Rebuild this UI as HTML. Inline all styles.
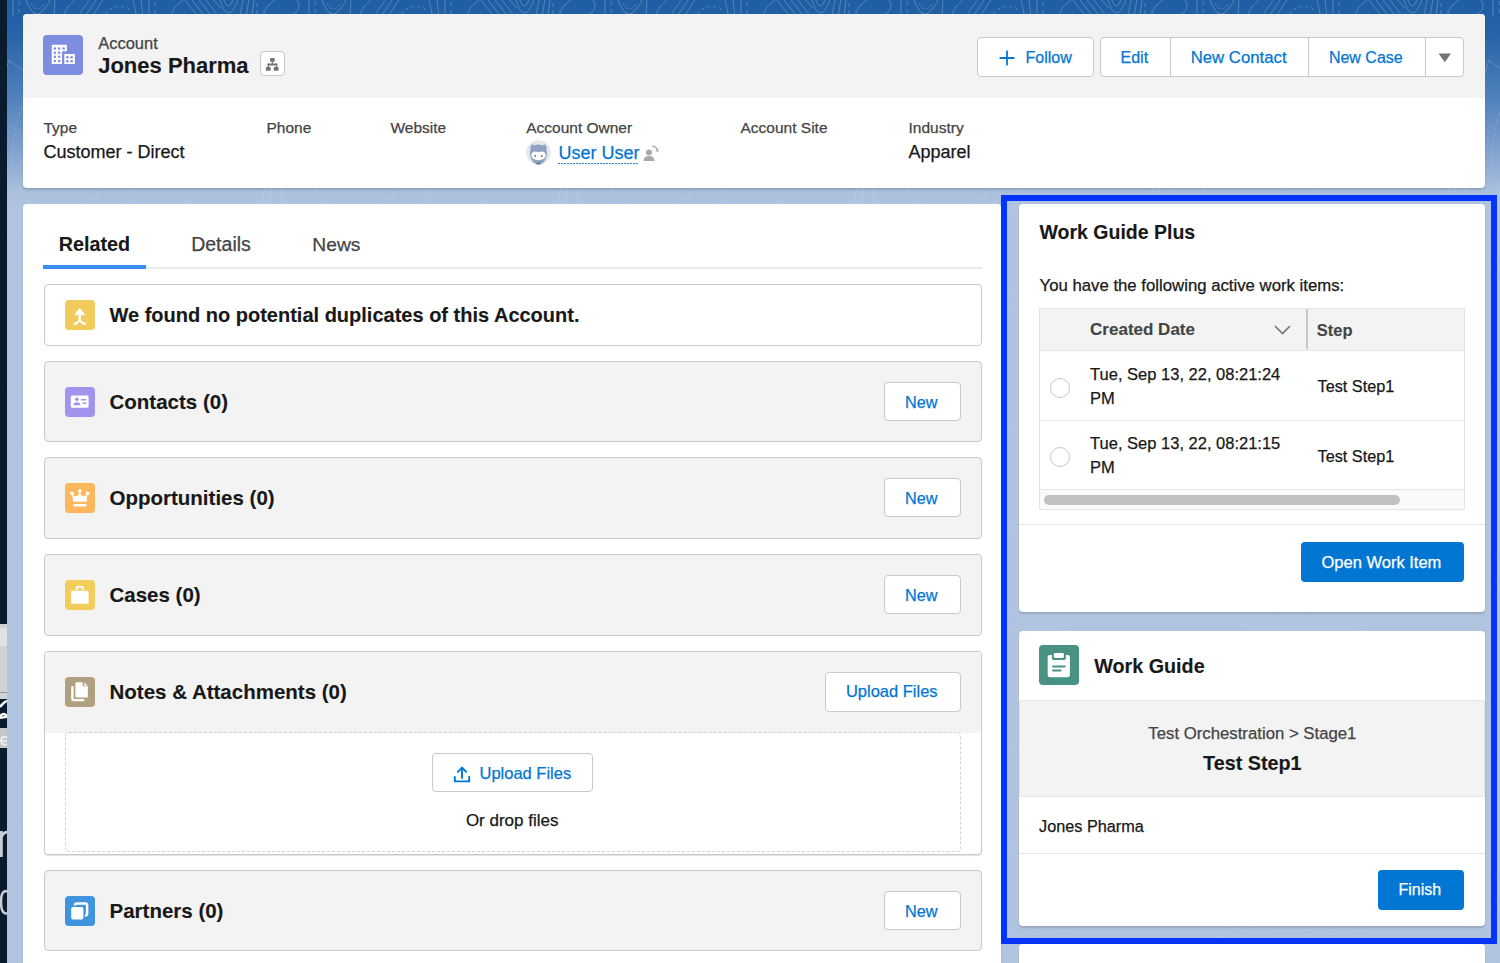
<!DOCTYPE html>
<html><head><meta charset="utf-8"><title>Jones Pharma | Account</title>
<style>
*{margin:0;padding:0;box-sizing:border-box}
html,body{width:1500px;height:963px;overflow:hidden}
body{position:relative;background:#0b1b2e;font-family:"Liberation Sans",sans-serif;color:#181818}
.t{position:absolute;white-space:nowrap;-webkit-text-stroke:0.25px currentColor}
.b{-webkit-text-stroke:0.12px currentColor}
.r{position:absolute}
.bg{position:absolute;left:7px;top:0;width:1493px;height:963px;background:linear-gradient(to bottom,#1e5ea3 0px,#2562a7 30px,#5282bd 100px,#80a2ce 150px,#a9bfdd 190px,#b0c4df 205px,#b0c4df 963px)}
.card{position:absolute;background:#fff;border-radius:4px;box-shadow:0 2px 2px rgba(0,0,0,.14)}
.btn{position:absolute;background:#fff;border:1px solid #c9c9c9;border-radius:4px}
.box{position:absolute;border:1px solid #c9c9c9;border-radius:4px;background:#f3f3f3}
.ico{position:absolute;width:30px;height:30px;border-radius:4px}
.ico svg{position:absolute;left:0;top:0;width:30px;height:30px}
</style></head><body>
<div class="bg">
<svg width="1493" height="963" style="position:absolute;left:0;top:0">
<defs><pattern id="topo" width="296" height="320" patternUnits="userSpaceOnUse" x="178" y="0">
<g fill="none" stroke="rgba(255,255,255,0.24)" stroke-width="1">
<path d="M0 0 L14 18 M7 0 L21 18 M14 0 L28 18 M21 0 L33 16 M28 0 L36 8"/>
<path d="M35 0 Q43 26 53 0 M39 0 Q43 12 48 0"/>
<path d="M55 16 L58 0 M61 16 L64 0 M67 16 L69 0 M72 3 L72 7 M72 10 L72 14"/>
<path d="M90 0 Q72 12 82 24"/>
<path d="M100 20 Q120 10 112 0"/>
<path d="M124 0 L124 16 M130 1 L130 5 M130 9 L130 13"/>
<path d="M137 0 Q147 28 161 0"/><path d="M142 3 Q148 15 156 3" stroke-dasharray="3 2"/>
<path d="M166 0 L165 18"/>
<path d="M186 0 Q170 12 178 24"/>
<path d="M188 18 L200 0 M195 18 L207 0 M202 18 L214 0"/>
<path d="M212 18 Q226 0 242 10" stroke-dasharray="3 3"/>
<path d="M244 0 L248 18 M252 0 L254 18 M260 0 L260 18 M266 2 L266 6 M266 10 L266 14"/>
<path d="M294 0 Q276 12 286 26"/>
<path d="M-160 60 C -120 20, -60 40, -40 90 S 20 160, -10 220"/>
<path d="M30 40 C 60 60, 40 120, 70 150 S 50 230, 90 280"/>
<path d="M40 48 C 66 70, 50 120, 78 148 S 60 226, 98 272"/>
<path d="M120 60 C 150 90, 200 70, 230 100 S 260 160, 240 200 S 180 260, 130 240 S 90 150, 120 60 Z"/>
<path d="M140 90 C 165 110, 200 100, 215 120 S 230 160, 215 185 S 170 220, 145 205 S 115 140, 140 90 Z" stroke-dasharray="4 3"/>
<path d="M0 200 C 40 230, 80 220, 120 260 S 200 300, 296 290"/>
<path d="M0 215 C 40 245, 80 235, 120 275 S 200 312, 296 305"/>
<path d="M250 40 C 270 80, 300 110, 280 160"/>
</g></pattern></defs>
<defs><linearGradient id="fadeg" x1="0" y1="0" x2="0" y2="1"><stop offset="0" stop-color="#fff" stop-opacity="1"/><stop offset="0.2" stop-color="#fff" stop-opacity="0.55"/><stop offset="0.3" stop-color="#fff" stop-opacity="0.3"/><stop offset="1" stop-color="#fff" stop-opacity="0.3"/></linearGradient>
<mask id="fadem"><rect width="1493" height="963" fill="url(#fadeg)"/></mask></defs>
<rect width="1493" height="963" fill="url(#topo)" mask="url(#fadem)"/>
</svg>
</div>

<div class="card" style="left:23px;top:14px;width:1462px;height:174px;overflow:hidden"><div class="r" style="left:0;top:0;width:1462px;height:84px;background:#f3f3f3"></div></div>
<div class="r" style="left:43px;top:35px;width:40px;height:40px;border-radius:4px;background:#7f8de1">
<svg width="40" height="40" viewBox="0 0 40 40" style="position:absolute;left:0;top:0">
<path d="M8.8 9.8 H23.9 V16.3 H19 V29 H8.8 Z" fill="#fff"/>
<rect x="21.3" y="19" width="10.6" height="10" fill="#fff"/>
<g fill="#7f8de1">
<circle cx="11.9" cy="13.6" r="1.25"/><circle cx="16.2" cy="13.6" r="1.25"/><circle cx="20.7" cy="13.6" r="1.25"/>
<circle cx="11.9" cy="17.8" r="1.25"/><circle cx="16.2" cy="17.8" r="1.25"/>
<circle cx="11.9" cy="21.7" r="1.25"/><circle cx="16.2" cy="21.7" r="1.25"/>
<circle cx="11.9" cy="25.9" r="1.25"/><circle cx="16.2" cy="25.9" r="1.25"/>
<circle cx="24.4" cy="22.25" r="1.25"/><circle cx="28.6" cy="22.25" r="1.25"/>
<circle cx="24.4" cy="26.3" r="1.25"/><circle cx="28.6" cy="26.3" r="1.25"/>
</g></svg></div>
<div class="t" style="left:98.20px;top:35.13px;font-size:16.5px;line-height:16.5px;color:#444444;font-weight:400;">Account</div>
<div class="t b" style="left:98.20px;top:54.68px;font-size:22px;line-height:22px;color:#181818;font-weight:700;">Jones Pharma</div>
<div class="btn" style="left:260px;top:51px;width:25px;height:25px">
<svg width="23" height="23" viewBox="0 0 23 23" style="position:absolute;left:0;top:0" fill="#747474">
<rect x="9" y="6" width="4.7" height="3.8" rx="0.8"/>
<rect x="10.8" y="9.5" width="1.1" height="2.6"/>
<rect x="6.65" y="11.6" width="9.55" height="1.8" rx="0.5"/>
<rect x="6.65" y="11.6" width="1.25" height="4"/><rect x="14.95" y="11.6" width="1.25" height="4"/>
<rect x="4.9" y="15.1" width="4.8" height="3.7" rx="0.8"/>
<rect x="12.8" y="15.1" width="4.8" height="3.7" rx="0.8"/>
</svg></div>
<div class="btn" style="left:977px;top:37px;width:117px;height:40px"></div>
<svg width="16" height="16" viewBox="0 0 16 16" style="position:absolute;left:999px;top:50.2px" stroke="#0176d3" stroke-width="1.8" stroke-linecap="round">
<line x1="8" y1="1.3" x2="8" y2="14.7"/><line x1="1.3" y1="8" x2="14.7" y2="8"/></svg>
<div class="t" style="left:1025.50px;top:49.76px;font-size:16.0px;line-height:16.0px;color:#0176d3;font-weight:400;">Follow</div>
<div class="btn" style="left:1100px;top:37px;width:364px;height:40px"></div>
<div class="r" style="left:1170px;top:38px;width:1px;height:38px;background:#c9c9c9"></div>
<div class="r" style="left:1308px;top:38px;width:1px;height:38px;background:#c9c9c9"></div>
<div class="r" style="left:1425px;top:38px;width:1px;height:38px;background:#c9c9c9"></div>
<div class="t" style="left:1120.50px;top:49.76px;font-size:16.0px;line-height:16.0px;color:#0176d3;font-weight:400;">Edit</div>
<div class="t" style="left:1190.70px;top:49.62px;font-size:16.75px;line-height:16.75px;color:#0176d3;font-weight:400;">New Contact</div>
<div class="t" style="left:1328.90px;top:49.76px;font-size:16.0px;line-height:16.0px;color:#0176d3;font-weight:400;">New Case</div>
<svg width="14" height="10" viewBox="0 0 14 10" style="position:absolute;left:1437.5px;top:53px"><path d="M0.5 0.5 L13 0.5 L6.75 9.2 Z" fill="#747474"/></svg>
<div class="t" style="left:43.50px;top:120.38px;font-size:15.5px;line-height:15.5px;color:#444444;font-weight:400;">Type</div>
<div class="t" style="left:266.50px;top:120.38px;font-size:15.5px;line-height:15.5px;color:#444444;font-weight:400;">Phone</div>
<div class="t" style="left:390.50px;top:120.38px;font-size:15.5px;line-height:15.5px;color:#444444;font-weight:400;">Website</div>
<div class="t" style="left:526.20px;top:120.38px;font-size:15.5px;line-height:15.5px;color:#444444;font-weight:400;">Account Owner</div>
<div class="t" style="left:740.50px;top:120.38px;font-size:15.5px;line-height:15.5px;color:#444444;font-weight:400;">Account Site</div>
<div class="t" style="left:908.50px;top:120.38px;font-size:15.5px;line-height:15.5px;color:#444444;font-weight:400;">Industry</div>
<div class="t" style="left:43.50px;top:142.56px;font-size:18.0px;line-height:18.0px;color:#181818;font-weight:400;">Customer - Direct</div>
<div class="t" style="left:908.50px;top:142.56px;font-size:18.0px;line-height:18.0px;color:#181818;font-weight:400;">Apparel</div>
<svg width="25" height="25" viewBox="0 0 25 25" style="position:absolute;left:526px;top:139.5px">
<circle cx="12.5" cy="12.5" r="12.3" fill="#e3e8ef"/>
<path d="M4.5 9.5 Q4.2 5.5 5.8 4.6 Q7 4 8.2 5.6 Q12.5 3.6 16.8 5.6 Q18 4 19.2 4.6 Q20.8 5.5 20.5 9.5 Q22 15 19.5 19.5 Q17 24 12.5 24.5 Q8 24 5.5 19.5 Q3 15 4.5 9.5 Z" fill="#8fa2bf"/>
<ellipse cx="12.5" cy="15.2" rx="7.3" ry="5" fill="#fff"/>
<path d="M6 12 Q9 8.5 12.5 9.6 Q16 8.5 19 12 Q16 11 12.5 12.2 Q9 11 6 12 Z" fill="#8fa2bf"/>
<circle cx="9.2" cy="16" r="0.9" fill="#5f7391"/><circle cx="15.8" cy="16" r="0.9" fill="#5f7391"/>
<ellipse cx="12.5" cy="23.6" rx="2.2" ry="1" fill="#5f7391"/>
</svg>
<div class="t" style="left:558.50px;top:144.06px;font-size:18.0px;line-height:18.0px;color:#0176d3;font-weight:400;">User User</div>
<div class="r" style="left:558px;top:162.5px;width:81px;height:1.5px;background:repeating-linear-gradient(to right,#0176d3 0 2px,transparent 2px 3px);opacity:.85"></div>
<svg width="16" height="17" viewBox="0 0 16 17" style="position:absolute;left:643px;top:145px" fill="#a9a9a9">
<circle cx="6" cy="7.5" r="3"/>
<path d="M0.5 16 Q0.5 11 6 11 Q11.5 11 11.5 16 Z"/>
<path d="M9 1.5 Q14 1 14.5 6" stroke="#a9a9a9" stroke-width="1.3" fill="none"/>
<path d="M12.5 5 L14.6 7.6 L16 4.6 Z"/>
</svg>
<div class="card" style="left:23px;top:204px;width:978px;height:800px"></div>
<div class="t b" style="left:58.70px;top:234.78px;font-size:19.75px;line-height:19.75px;color:#181818;font-weight:700;">Related</div>
<div class="t" style="left:191.20px;top:234.99px;font-size:19.5px;line-height:19.5px;color:#444444;font-weight:400;">Details</div>
<div class="t" style="left:312.30px;top:235.20px;font-size:19.25px;line-height:19.25px;color:#444444;font-weight:400;">News</div>
<div class="r" style="left:43px;top:267px;width:939px;height:2px;background:#ebebeb"></div>
<div class="r" style="left:43px;top:265px;width:103px;height:4px;background:#3a8ef3"></div>
<div class="box" style="left:44px;top:284px;width:938px;height:62px;background:#fff"></div>
<div class="ico" style="left:64.6px;top:299.8px;background:#f1cb5b">
<svg viewBox="0 0 30 30"><path d="M14.7 8.3 L19.9 14.8 L9.5 14.8 Z" fill="#fff" stroke="#fff" stroke-width="0.6" stroke-linejoin="round"/>
<path d="M14.7 14 L14.7 19.5 Q14.5 21.8 9.8 23.9 M14.7 19.5 Q14.9 21.8 19.8 23.9" stroke="#fff" stroke-width="2.4" fill="none" stroke-linecap="round"/>
</svg></div>
<div class="t b" style="left:109.50px;top:304.67px;font-size:20.0px;line-height:20.0px;color:#181818;font-weight:700;">We found no potential duplicates of this Account.</div>
<div class="box" style="left:44px;top:361px;width:938px;height:81px"></div>
<div class="ico" style="left:64.6px;top:387px;background:#a094ed"><svg viewBox="0 0 30 30"><rect x="5.8" y="8.5" width="17.8" height="12.2" rx="1.4" fill="#fff"/>
<circle cx="11.8" cy="12.3" r="1.8" fill="#a094ed"/><path d="M8.4 18.2 Q8.4 15.2 11.8 15.2 Q15.4 15.2 15.4 18.2 Z" fill="#a094ed"/>
<rect x="15.8" y="11.9" width="5.6" height="1.5" rx="0.6" fill="#a094ed"/><rect x="17.4" y="15.4" width="4" height="1.6" rx="0.6" fill="#a094ed"/></svg></div>
<div class="t b" style="left:109.50px;top:391.95px;font-size:20.5px;line-height:20.5px;color:#181818;font-weight:700;">Contacts (0)</div>
<div class="btn" style="left:884px;top:382px;width:77px;height:39px"></div>
<div class="t" style="left:905.00px;top:393.54px;font-size:16.25px;line-height:16.25px;color:#0176d3;font-weight:400;">New</div>
<div class="box" style="left:44px;top:457px;width:938px;height:82px"></div>
<div class="ico" style="left:64.6px;top:483px;background:#fbb75b"><svg viewBox="0 0 30 30" fill="#fff"><circle cx="7" cy="10.3" r="1.9"/><circle cx="14.8" cy="8.1" r="1.9"/><circle cx="22.6" cy="10.3" r="1.9"/>
<path d="M7.2 11.2 Q10.5 14.5 12.6 12.4 Q14.5 10.5 14.8 9.2 Q15.1 10.5 17 12.4 Q19.1 14.5 22.4 11.2 L21.6 18.7 L8 18.7 Z"/>
<path d="M8.1 21 L21.6 21 L21.4 22.4 Q21.1 23.4 20 23.4 L9.7 23.4 Q8.6 23.4 8.3 22.4 Z"/></svg></div>
<div class="t b" style="left:109.50px;top:487.95px;font-size:20.5px;line-height:20.5px;color:#181818;font-weight:700;">Opportunities (0)</div>
<div class="btn" style="left:884px;top:478px;width:77px;height:39px"></div>
<div class="t" style="left:905.00px;top:489.54px;font-size:16.25px;line-height:16.25px;color:#0176d3;font-weight:400;">New</div>
<div class="box" style="left:44px;top:554px;width:938px;height:82px"></div>
<div class="ico" style="left:64.6px;top:580px;background:#f2cd5c"><svg viewBox="0 0 30 30" fill="#fff"><rect x="6" y="10.8" width="17.6" height="12.9" rx="1"/>
<path d="M11.8 10 L11.8 8.2 Q11.8 6.8 13.2 6.8 L16.6 6.8 Q18 6.8 18 8.2 L18 10" stroke="#fff" stroke-width="2" fill="none"/></svg></div>
<div class="t b" style="left:109.50px;top:584.95px;font-size:20.5px;line-height:20.5px;color:#181818;font-weight:700;">Cases (0)</div>
<div class="btn" style="left:884px;top:575px;width:77px;height:39px"></div>
<div class="t" style="left:905.00px;top:586.54px;font-size:16.25px;line-height:16.25px;color:#0176d3;font-weight:400;">New</div>
<div class="box" style="left:44px;top:651px;width:938px;height:204px;background:#fff;overflow:hidden;box-shadow:0 1px 1px rgba(0,0,0,.12)"><div class="r" style="left:0;top:0;width:936px;height:80.5px;background:#f3f3f3;border-radius:0 0 4px 4px"></div></div>
<div class="ico" style="left:64.6px;top:677px;background:#b1a07f"><svg viewBox="0 0 30 30" fill="#fff"><path d="M10.4 6.3 Q10.4 5.3 11.4 5.3 L17.7 5.3 L17.7 8.2 Q17.7 9.2 18.7 9.2 L22.85 9.2 L22.85 19.6 Q22.85 20.6 21.85 20.6 L11.4 20.6 Q10.4 20.6 10.4 19.6 Z"/>
<path d="M19.2 5.5 L22.8 8.6 L19.2 8.6 Z"/><path d="M6.2 10 Q6.2 9 7.2 9 L8.6 9 L8.6 21 Q8.6 22 9.6 22 L19.2 22 L19.2 24.3 L8.2 24.3 Q6.2 24.3 6.2 22.3 Z"/></svg></div>
<div class="t b" style="left:109.50px;top:682.05px;font-size:20.5px;line-height:20.5px;color:#181818;font-weight:700;">Notes &amp; Attachments (0)</div>
<div class="btn" style="left:825px;top:672px;width:136px;height:40px"></div>
<div class="t" style="left:845.90px;top:683.33px;font-size:16.5px;line-height:16.5px;color:#0176d3;font-weight:400;">Upload Files</div>
<div class="r" style="left:65px;top:732px;width:896px;height:120px;border:1px dashed #d2d2d2;border-radius:4px"></div>
<div class="btn" style="left:432px;top:753px;width:161px;height:39px"></div>
<svg width="20" height="20" viewBox="0 0 20 20" style="position:absolute;left:451.5px;top:765px" fill="none" stroke="#0176d3" stroke-width="1.9" stroke-linecap="round" stroke-linejoin="round">
<path d="M10 13 L10 3"/><path d="M5.8 6.8 L10 2.6 L14.2 6.8"/><path d="M2.8 12 L2.8 16.4 L17.2 16.4 L17.2 12"/></svg>
<div class="t" style="left:479.50px;top:765.23px;font-size:16.5px;line-height:16.5px;color:#0176d3;font-weight:400;">Upload Files</div>
<div class="t" style="left:465.90px;top:811.61px;font-size:17.0px;line-height:17.0px;color:#181818;font-weight:400;">Or drop files</div>
<div class="box" style="left:44px;top:870px;width:938px;height:81px"></div>
<div class="ico" style="left:64.6px;top:896px;background:#3e95dd"><svg viewBox="0 0 30 30"><rect x="9.9" y="7.4" width="12.2" height="12.2" rx="1.8" fill="none" stroke="#fff" stroke-width="2.5"/>
<rect x="4.7" y="9.6" width="15.2" height="15.5" rx="2.5" fill="#3e95dd"/>
<rect x="6.2" y="11.1" width="12.2" height="12.5" rx="1.8" fill="#fff"/></svg></div>
<div class="t b" style="left:109.50px;top:900.95px;font-size:20.5px;line-height:20.5px;color:#181818;font-weight:700;">Partners (0)</div>
<div class="btn" style="left:884px;top:891px;width:77px;height:39px"></div>
<div class="t" style="left:905.00px;top:902.54px;font-size:16.25px;line-height:16.25px;color:#0176d3;font-weight:400;">New</div>
<div class="card" style="left:1019px;top:944px;width:466px;height:100px"></div>
<div class="card" style="left:1019px;top:204px;width:466px;height:408px"></div>
<div class="t b" style="left:1039.50px;top:223.09px;font-size:19.5px;line-height:19.5px;color:#181818;font-weight:700;">Work Guide Plus</div>
<div class="t" style="left:1039.50px;top:277.82px;font-size:16.75px;line-height:16.75px;color:#181818;font-weight:400;">You have the following active work items:</div>
<div class="r" style="left:1039px;top:308px;width:426px;height:202px;border:1px solid #e5e5e5;background:#fff"></div>
<div class="r" style="left:1040px;top:309px;width:424px;height:41px;background:#f3f3f3"></div>
<div class="r" style="left:1040px;top:350px;width:424px;height:1px;background:#e5e5e5"></div>
<div class="t b" style="left:1090.10px;top:321.21px;font-size:17.0px;line-height:17.0px;color:#444444;font-weight:700;">Created Date</div>
<svg width="17" height="10" viewBox="0 0 17 10" style="position:absolute;left:1273.5px;top:325px" fill="none" stroke="#747474" stroke-width="1.6" stroke-linecap="round"><path d="M1.5 1.5 L8.5 8.5 L15.5 1.5"/></svg>
<div class="r" style="left:1306px;top:309px;width:1.5px;height:40px;background:#c9c9c9"></div>
<div class="t b" style="left:1316.80px;top:321.63px;font-size:16.5px;line-height:16.5px;color:#444444;font-weight:700;">Step</div>
<div class="r" style="left:1040px;top:420px;width:424px;height:1px;background:#e5e5e5"></div>
<div class="r" style="left:1040px;top:489px;width:424px;height:1px;background:#e5e5e5"></div>
<div class="r" style="left:1050px;top:377.5px;width:20px;height:20px;border-radius:50%;border:1px solid #c9c9c9;background:#fff"></div>
<div class="r" style="left:1050px;top:446.7px;width:20px;height:20px;border-radius:50%;border:1px solid #c9c9c9;background:#fff"></div>
<div class="t" style="left:1090.10px;top:366.03px;font-size:16.5px;line-height:16.5px;color:#181818;font-weight:400;">Tue, Sep 13, 22, 08:21:24</div>
<div class="t" style="left:1090.10px;top:389.63px;font-size:16.5px;line-height:16.5px;color:#181818;font-weight:400;">PM</div>
<div class="t" style="left:1317.50px;top:378.34px;font-size:16.25px;line-height:16.25px;color:#181818;font-weight:400;">Test Step1</div>
<div class="t" style="left:1090.10px;top:435.23px;font-size:16.5px;line-height:16.5px;color:#181818;font-weight:400;">Tue, Sep 13, 22, 08:21:15</div>
<div class="t" style="left:1090.10px;top:458.83px;font-size:16.5px;line-height:16.5px;color:#181818;font-weight:400;">PM</div>
<div class="t" style="left:1317.50px;top:447.74px;font-size:16.25px;line-height:16.25px;color:#181818;font-weight:400;">Test Step1</div>
<div class="r" style="left:1040px;top:490px;width:424px;height:19px;background:#fafafa"></div>
<div class="r" style="left:1044px;top:495px;width:356px;height:10px;background:#c1c1c1;border-radius:5px"></div>
<div class="r" style="left:1019px;top:524px;width:466px;height:1px;background:#e5e5e5"></div>
<div class="r" style="left:1301px;top:542px;width:163px;height:40px;border-radius:4px;background:#0176d3"></div>
<div class="t" style="left:1321.50px;top:554.03px;font-size:16.5px;line-height:16.5px;color:#fff;font-weight:400;">Open Work Item</div>
<div class="card" style="left:1019px;top:631px;width:466px;height:295px;overflow:hidden"></div>
<div class="r" style="left:1039.2px;top:645px;width:39.6px;height:39.8px;border-radius:4px;background:#489284">
<svg width="40" height="40" viewBox="0 0 40 40" style="position:absolute;left:0;top:0">
<rect x="8.7" y="10.1" width="22.2" height="22.1" rx="2.2" fill="#fff"/>
<rect x="12.9" y="6.8" width="14" height="8.3" rx="2.6" fill="#489284"/>
<rect x="14.8" y="8" width="10.1" height="5" rx="1.4" fill="#fff"/>
<path d="M14.1 21.5 L25.6 21.5 M14.1 25.5 L21.6 25.5" stroke="#489284" stroke-width="2.1" stroke-linecap="round"/>
</svg></div>
<div class="t b" style="left:1094.20px;top:656.68px;font-size:19.75px;line-height:19.75px;color:#181818;font-weight:700;">Work Guide</div>
<div class="r" style="left:1019px;top:700px;width:466px;height:97px;background:#f3f3f3;border:1px solid #e5e5e5;border-radius:2px"></div>
<div class="t" style="left:952.40px;width:600px;text-align:center;top:725.82px;font-size:16.75px;line-height:16.75px;color:#444444;font-weight:400;">Test Orchestration &gt; Stage1</div>
<div class="t b" style="left:952.30px;width:600px;text-align:center;top:753.88px;font-size:19.75px;line-height:19.75px;color:#181818;font-weight:700;">Test Step1</div>
<div class="t" style="left:1039.00px;top:818.14px;font-size:16.25px;line-height:16.25px;color:#181818;font-weight:400;">Jones Pharma</div>
<div class="r" style="left:1019px;top:853px;width:466px;height:1px;background:#e5e5e5"></div>
<div class="r" style="left:1378px;top:870px;width:86px;height:39.5px;border-radius:4px;background:#0176d3"></div>
<div class="t" style="left:1398.50px;top:881.76px;font-size:16.0px;line-height:16.0px;color:#fff;font-weight:400;">Finish</div>
<div class="r" style="left:1001px;top:195px;width:496px;height:749px;border:6px solid #0433ff"></div>
<div class="r" style="left:0px;top:624px;width:7px;height:75px;background:#d2d2d2"></div>
<div class="r" style="left:0px;top:628px;width:7px;height:18px;background:#e2e2e2"></div>
<div class="r" style="left:0px;top:692px;width:7px;height:1px;background:#9a9a9a"></div>
<div class="r" style="left:0px;top:728px;width:7px;height:20px;background:#c6c6c6"></div>
<div class="r" style="left:0;top:699px;width:7px;height:29px;overflow:hidden"><svg width="7" height="29" viewBox="0 0 7 29"><path d="M0 8 Q4 3 7 2" stroke="#fff" stroke-width="2.5" fill="none"/><path d="M-2 24 C -2 14, 7 13, 6 18 L -1 19" stroke="#fff" stroke-width="2.4" fill="none"/></svg></div>
<div class="r" style="left:0;top:730px;width:7px;height:17px;overflow:hidden"><svg width="7" height="17" viewBox="0 0 7 17"><path d="M7 11 L1 11 C 1 6, 7 5, 7 9 M1 11 C 1 15, 6 15, 7 14" stroke="#f0f0f0" stroke-width="1.6" fill="none"/></svg></div>
<div class="r" style="left:0;top:826px;width:7px;height:34px;overflow:hidden"><svg width="7" height="34" viewBox="0 0 7 34"><rect x="0" y="5" width="2.8" height="26" fill="#c9ced6"/><path d="M1.5 11 Q3 6 8 6" stroke="#c9ced6" stroke-width="2.8" fill="none"/></svg></div>
<div class="r" style="left:0;top:886px;width:7px;height:32px;overflow:hidden"><svg width="7" height="32" viewBox="0 0 7 32"><path d="M9 6 Q1 2 1 16 Q1 30 9 27" stroke="#c9ced6" stroke-width="2.6" fill="none"/></svg></div>
</body></html>
